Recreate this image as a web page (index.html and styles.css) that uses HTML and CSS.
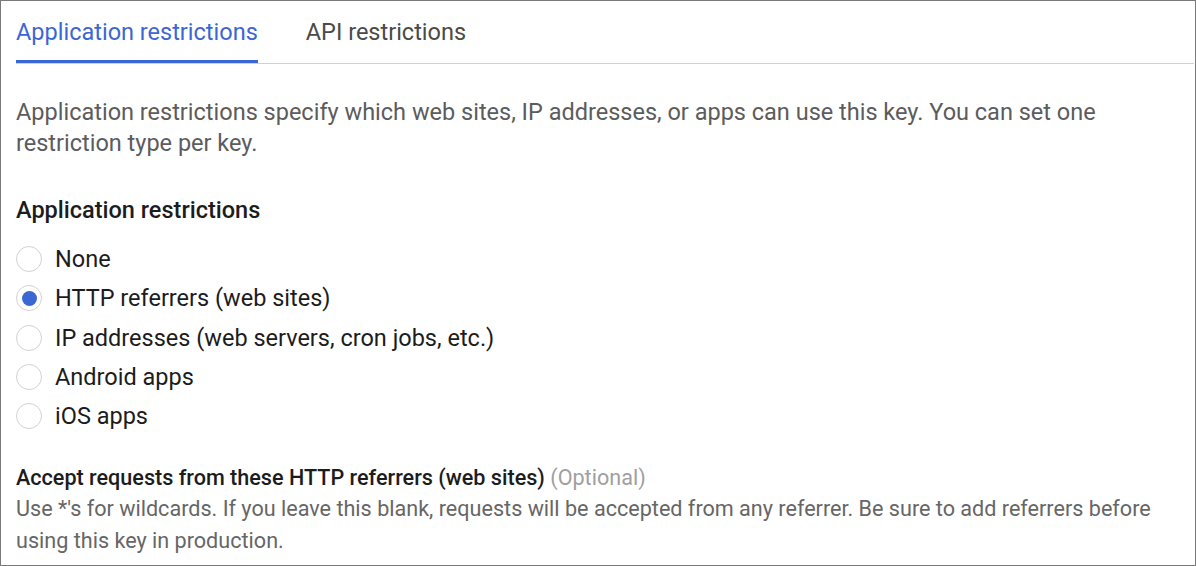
FILE: index.html
```html
<!DOCTYPE html>
<html>
<head>
<meta charset="utf-8">
<link rel="stylesheet" href="styles.css">
</head>
<body>
<div class="frame">
  <div class="tabs">
    <div class="tab active">Application restrictions</div>
    <div class="tab">API restrictions</div>
  </div>
  <p class="intro">Application restrictions specify which web sites, IP addresses, or apps can use this key. You can set one restriction type per key.</p>
  <h2 class="heading">Application restrictions</h2>
  <div class="radios">
    <label class="radio"><span class="circle"></span><span class="label">None</span></label>
    <label class="radio"><span class="circle checked"></span><span class="label">HTTP referrers (web sites)</span></label>
    <label class="radio"><span class="circle"></span><span class="label">IP addresses (web servers, cron jobs, etc.)</span></label>
    <label class="radio"><span class="circle"></span><span class="label">Android apps</span></label>
    <label class="radio"><span class="circle"></span><span class="label">iOS apps</span></label>
  </div>
  <div class="accept">
    <div class="accept-title">Accept requests from these HTTP referrers (web sites) <span class="optional">(Optional)</span></div>
    <p class="accept-desc">Use *'s for wildcards. If you leave this blank, requests will be accepted from any referrer. Be sure to add referrers before using this key in production.</p>
  </div>
</div>
</body>
</html>
```
FILE: styles.css
```css
html, body {
  margin: 0;
  padding: 0;
  background: #fff;
}
body {
  font-family: Roboto, "Liberation Sans", sans-serif;
}
.frame {
  box-sizing: border-box;
  width: 1196px;
  height: 566px;
  border: 1px solid #7a7a7a;
  padding: 0 1px 0 15px;
  overflow: hidden;
  background: #fff;
}
.tabs {
  display: flex;
  gap: 48px;
  border-bottom: 1px solid #d0d0d0;
  margin-top: 16px;
}
.tab {
  font-size: 23.5px;
  line-height: 30px;
  color: #4a4a4a;
  padding-bottom: 13px;
  border-bottom: 3px solid transparent;
}
.tab.active {
  color: #3b67d4;
  border-bottom-color: #3b67d4;
}
.intro {
  margin: 32.5px 0 0;
  font-size: 23.5px;
  line-height: 31px;
  color: #5c5c5c;
}
.heading {
  margin: 36.5px 0 0;
  font-size: 23.5px;
  font-weight: 500;
  line-height: 30px;
  color: #1c1c1c;
}
.radios {
  margin-top: 14.3px;
  display: flex;
  flex-direction: column;
}
.radio {
  display: flex;
  align-items: center;
  gap: 13px;
  height: 39.3px;
}
.circle {
  box-sizing: border-box;
  width: 26px;
  height: 26px;
  border: 1.5px solid #d2d2d2;
  border-radius: 50%;
  display: flex;
  align-items: center;
  justify-content: center;
}
.circle.checked::after {
  content: "";
  width: 15px;
  height: 15px;
  border-radius: 50%;
  background: #3b67d4;
}
.label {
  font-size: 23.5px;
  color: #1c1c1c;
}
.accept {
  margin-top: 27px;
}
.accept-title {
  font-size: 21.6px;
  font-weight: 500;
  line-height: 30px;
  color: #1c1c1c;
}
.optional {
  font-weight: 400;
  color: #a0a0a0;
}
.accept-desc {
  margin: 0;
  font-size: 21.6px;
  line-height: 32px;
  color: #666;
}
```
